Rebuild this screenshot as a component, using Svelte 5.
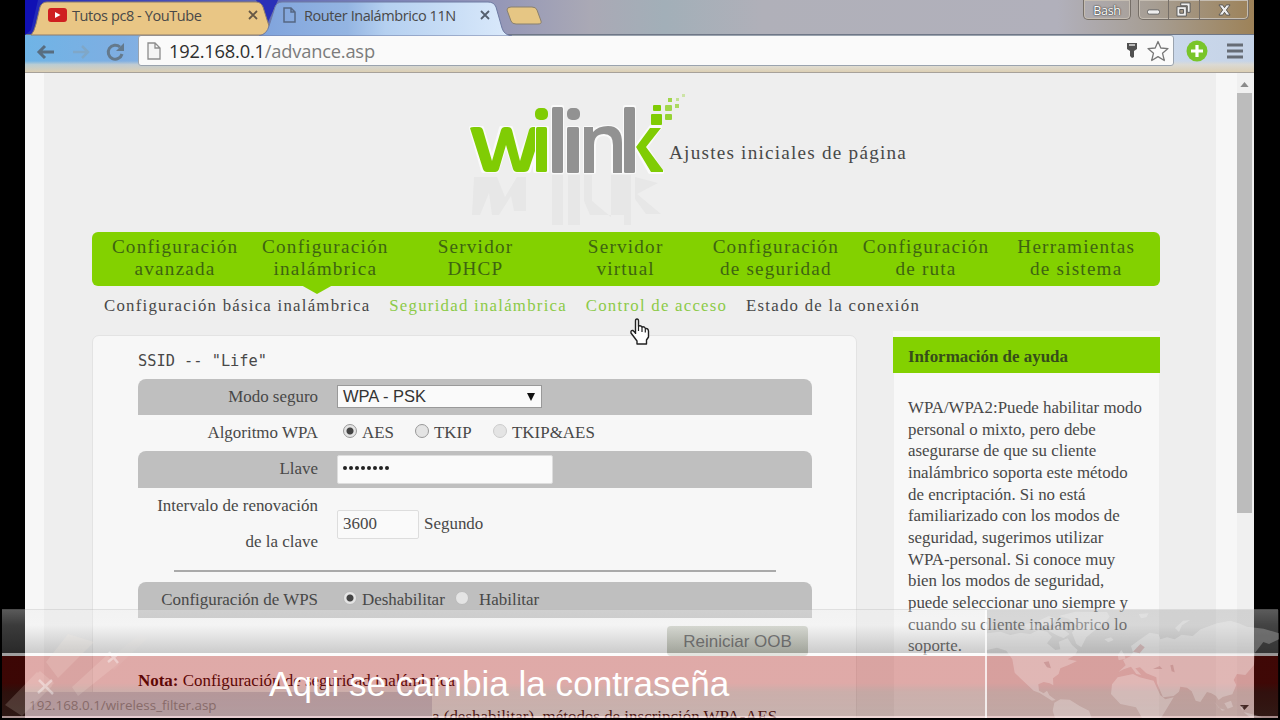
<!--
  Ventana del navegador con la configuración del router y el rótulo inferior.
-->
<script lang="ts">
	interface MenuItem {
		lines: [string, string];
		active?: boolean;
	}

	const menu: MenuItem[] = [
		{ lines: ['Configuración', 'avanzada'] },
		{ lines: ['Configuración', 'inalámbrica'], active: true },
		{ lines: ['Servidor', 'DHCP'] },
		{ lines: ['Servidor', 'virtual'] },
		{ lines: ['Configuración', 'de seguridad'] },
		{ lines: ['Configuración', 'de ruta'] },
		{ lines: ['Herramientas', 'de sistema'] }
	];

	const submenu = [
		{ label: 'Configuración básica inalámbrica', green: false },
		{ label: 'Seguridad inalámbrica', green: true },
		{ label: 'Control de acceso', green: true },
		{ label: 'Estado de la conexión', green: false }
	];

	const help = [
		'WPA/WPA2:Puede habilitar modo',
		'personal o mixto, pero debe',
		'asegurarse de que su cliente',
		'inalámbrico soporta este método',
		'de encriptación. Si no está',
		'familiarizado con los modos de',
		'seguridad, sugerimos utilizar',
		'WPA-personal. Si conoce muy',
		'bien los modos de seguridad,',
		'puede seleccionar uno siempre y',
		'cuando su cliente inalámbrico lo',
		'soporte.'
	];
</script>

{#snippet radio(on: boolean, faint: boolean)}
	<span class="radio" class:on class:faint></span>
{/snippet}

<div class="screen">
	<div class="window">
		<header class="tabs">
			<svg class="tab-shapes" width="530" height="36" viewBox="25 0 530 36">
				<path d="M25 0H38L31 30L25 35Z" fill="#1010b4" />
				<path d="M256 0H278L268 22Z" fill="#2a30b8" />
				<path d="M31 35Q34 32 36 24L40 7Q42 2 47 2H256Q261 2 263 7L269 26Q270 33 262 35Z" fill="#e9c685" stroke="#8d7d6c" />
				<path d="M259 36Q267 34 269 26L275 7Q277 2 282 2H488Q494 2 496 7L502 28Q504 35 512 36Z" fill="url(#tabfill)" stroke="#6e7aa2" />
				<path d="M507 10Q507 7 511 7H532Q536 7 537 10L541 21Q542 24 538 24H516Q512 24 511 21Z" fill="#e6c684" stroke="#89806f" />
				<defs>
					<linearGradient id="tabfill">
						<stop offset="0" stop-color="#7fa3dc" />
						<stop offset=".35" stop-color="#94b5e2" />
						<stop offset=".5" stop-color="#b5d0f0" />
						<stop offset="1" stop-color="#dbeafb" />
					</linearGradient>
				</defs>
			</svg>
			<div class="tab first">
				<svg width="19" height="14" viewBox="0 0 19 14"><rect width="19" height="14" rx="3" fill="#cf1f20" /><path d="M7 4L12.500 7L7 10Z" fill="#fff" /></svg>
				<span class="tab-title">Tutos pc8 - YouTube</span>
				<svg width="10" height="10" viewBox="0 0 10 10"><path d="M1 1L9 9M9 1L1 9" stroke="#665845" stroke-width="1.800" /></svg>
			</div>
			<div class="tab second">
				<svg width="13" height="16" viewBox="0 0 13 16"><path d="M1 1H8L12 5V15H1ZM8 1V5H12" fill="none" stroke="#566783" stroke-width="1.500" /></svg>
				<span class="tab-title">Router Inalámbrico 11N</span>
				<svg width="10" height="10" viewBox="0 0 10 10"><path d="M1 1L9 9M9 1L1 9" stroke="#555f6e" stroke-width="1.800" /></svg>
			</div>
			<div class="bash">Bash</div>
			<div class="controls">
				<span class="min"><svg width="15" height="6" viewBox="0 0 16 7"><rect x="1" y="1" width="14" height="5" rx="2" fill="#eee" stroke="#555" /></svg></span>
				<span class="max"><svg width="16" height="15" viewBox="0 0 17 16"><path d="M5 1H15V11H12V4H5Z" fill="#eee" stroke="#555" /><path d="M1 5H11V15H1ZM4 8V12H8V8Z" fill="#eee" fill-rule="evenodd" stroke="#555" /></svg></span>
				<span class="close"><svg width="13" height="12" viewBox="0 0 14 13"><path d="M1 1H5L7 4L9 1H13L9 6.500L13 12H9L7 9L5 12H1L5 6.500Z" fill="#eee" stroke="#555" /></svg></span>
			</div>
		</header>

		<div class="toolbar">
			<svg class="nav-icons" width="90" height="24" viewBox="0 0 90 24">
				<path d="M20 13H5M11 7L5 13L11 19" fill="none" stroke="#586d80" stroke-width="3" />
				<path d="M39 13H54M48 7L54 13L48 19" fill="none" stroke="#7fa7c8" stroke-width="2.500" />
				<path d="M86 8A7 7 0 1 0 88 15" fill="none" stroke="#64798c" stroke-width="3" />
				<path d="M90 4V12H82Z" fill="#64798c" />
			</svg>
			<div class="address">
				<svg width="14" height="18" viewBox="0 0 14 18"><path d="M1 1H8L13 6V17H1ZM8 1V6H13" fill="#f4f4f4" stroke="#8d8d8d" stroke-width="1.300" /></svg>
				<span class="url">192.168.0.1<span class="path">/advance.asp</span></span>
				<svg class="key" width="12" height="17" viewBox="0 0 12 17"><path d="M1 1H11V7L8 9V15L6 16L4 14V9L1 7Z" fill="#505050" /><path d="M3 3H9" stroke="#ddd" stroke-width="1.500" /></svg>
				<svg width="22" height="22" viewBox="0 0 22 22"><path d="M11 1.500L13.800 8L21 8.600L15.500 13.200L17.300 20.500L11 16.600L4.700 20.500L6.500 13.200L1 8.600L8.200 8Z" fill="#fcfcfc" stroke="#777" stroke-width="1.300" stroke-linejoin="round" /></svg>
			</div>
			<svg width="22" height="22" viewBox="0 0 22 22"><circle cx="11" cy="11" r="10.500" fill="#79c52a" /><path d="M11 5V17M5 11H17" stroke="#fff" stroke-width="3.200" /></svg>
			<svg class="burger" width="16" height="16" viewBox="0 0 16 16"><path d="M0 2H16M0 8H16M0 14H16" stroke="#666c75" stroke-width="3" /></svg>
		</div>

		<div class="viewport">
			<main class="page">
				<div class="brand">
					<svg width="225" height="140" viewBox="0 0 225 140">
						<g fill="#e7e7e7">
							<path d="M14 92H37L45 112L57 92H66V126H54L51 111L39 130H32L29 108L20 130H12Z" />
							<path d="M92 90H103V140H92ZM108 90H120V140H108ZM124 90H132V116L151 132V90H171V140H164V130H130L124 116ZM175 92L198 98L177 109L201 129H186L175 114Z" />
						</g>
						<g stroke="#fafafa" stroke-width="4" fill="#fafafa" stroke-linejoin="round">
							<path d="M11 43H22L32 75L41 43H51L60 73L72 43H87V86H75V66L69 86H55L46 58L37 86H23Z" />
							<path d="M93 22H102V87H93ZM108 43H118V87H108ZM125 43H132V47Q138 42 148 42Q162 42 162 58V87H153V60Q153 49 144 49Q134 49 134 60V87H125ZM165 22H174V87H165ZM176 62L191 42H200L186 62L202 87H190Z" />
						</g>
						<g fill="#80cc04">
							<path d="M10 43Q11 42 14 42H19Q22 42 23 45L32 76L41 45Q42 42 45 42H48Q51 42 52 45L60 76L69 45Q70 42 73 42H75V66L69 84Q68 87 64 87H57Q54 87 53 84L46 60L39 84Q38 87 35 87H27Q24 87 23 84Z" />
							<rect x="76" y="42" width="11" height="45" rx="1.500" />
							<rect x="75" y="23" width="13" height="12" rx="5" />
							<path d="M176 62L190 43H201L186 62L203 85V87H191Z" />
							<rect x="191" y="29" width="11" height="11" rx="1" />
							<rect x="193" y="20" width="8" height="6" rx="1" />
							<rect x="205" y="29" width="7" height="6" rx="1" opacity=".8" />
							<rect x="205" y="20" width="7" height="6" rx="1" opacity=".7" />
							<rect x="208" y="13" width="4" height="4" opacity=".7" />
							<rect x="215" y="19" width="4" height="4" opacity=".6" />
							<rect x="216" y="13" width="3" height="3" opacity=".4" />
							<rect x="222" y="9" width="3" height="3" opacity=".3" />
						</g>
						<g fill="#929292">
							<rect x="92" y="22" width="11" height="66" rx="1.500" />
							<rect x="107" y="42" width="12" height="46" rx="1.500" />
							<rect x="107" y="23" width="13" height="12" rx="5" />
							<path d="M124 42H133V47Q138 41 148 41Q162 41 162 58V88H153V60Q153 49 144 49Q134 49 134 60V88H124Z" />
							<rect x="164" y="22" width="11" height="66" rx="1.500" />
						</g>
					</svg>
					<span class="tagline">Ajustes iniciales de página</span>
				</div>

				<nav class="menu">
					{#each menu as item}
						<a class="item" class:active={item.active}>
							{item.lines[0]}<br />{item.lines[1]}
						</a>
					{/each}
				</nav>
				<div class="submenu">
					{#each submenu as item}
						<span class:green={item.green}>{item.label}</span>
					{/each}
				</div>

				<div class="columns">
					<section class="panel">
						<div class="ssid">SSID -- "Life"</div>
						<div class="row grey mode">
							<span class="label">Modo seguro</span>
							<span class="select">WPA - PSK <i></i></span>
						</div>
						<div class="row algo">
							<span class="label">Algoritmo WPA</span>
							{@render radio(true, false)}<span class="opt aes">AES</span>
							{@render radio(false, false)}<span class="opt tkip">TKIP</span>
							{@render radio(false, true)}<span class="opt">TKIP&amp;AES</span>
						</div>
						<div class="row grey secret">
							<span class="label">Llave</span>
							<span class="input dots">
								{#each Array(8) as _}<i></i>{/each}
							</span>
						</div>
						<div class="row interval">
							<span class="label">Intervalo de renovación<br />de la clave</span>
							<span class="input small">3600</span>
							<span class="unit">Segundo</span>
						</div>
						<hr />
						<div class="row grey wps">
							<span class="label">Configuración de WPS</span>
							{@render radio(true, false)}<span class="opt off">Deshabilitar</span>
							{@render radio(false, false)}<span class="opt enable">Habilitar</span>
						</div>
						<div class="oob">Reiniciar OOB</div>
						<p class="note"><b>Nota:</b> <span>Configuración de seguridad inalámbrica</span></p>
						<p class="cut">a (deshabilitar), métodos de inscripción WPA-AES</p>
					</section>

					<aside>
						<h2>Información de ayuda</h2>
						<div class="help">
							{#each help as line}<div>{line}</div>{/each}
						</div>
					</aside>
				</div>
			</main>
			<div class="scrollbar">
				<svg width="9" height="5" viewBox="0 0 10 6"><path d="M0 6L5 0L10 6Z" fill="#8a8a8a" /></svg>
				<div class="thumb"></div>
				<svg class="down" width="9" height="5" viewBox="0 0 9 5"><path d="M0 0H9L4.500 5Z" fill="#222" /></svg>
			</div>
			<div class="status">192.168.0.1/wireless_filter.asp</div>
		</div>
	</div>

	<svg class="cursor" width="22" height="28" viewBox="0 0 22 28">
		<path d="M6.500 16V3Q6.500 1 8 1Q9.500 1 9.500 3V8Q12 7 13 9Q15 8 16.500 10.500Q19 10 19.500 13V19L17.500 22V26H8V23L5 19L2 15Q1.500 12 4 12.500L6.500 15" fill="#fff" stroke="#222" stroke-width="1.400" stroke-linejoin="round" />
		<path d="M9.500 8V13M13 9V14M16.300 10.500V14.500" stroke="#222" stroke-width="1.200" />
	</svg>

	<div class="banner">
		<div class="glass"></div>
		<div class="red"></div>
		<svg class="shards" width="160" height="108" viewBox="0 0 160 108">
			<g fill="#fff3e6" opacity=".16">
				<path d="M3 95L35 62L50 76L20 106Z" />
				<path d="M24 74L38 61L52 73L30 96Z" />
				<path d="M44 52L66 24L92 32L56 68Z" />
				<path d="M70 77L105 45L116 54L76 86Z" />
				<path d="M104 52L138 24L146 28L112 60Z" opacity=".4" />
			</g>
			<path d="M37 70L51 84M50 70L36 83M107 42L116 53M116 44L106 52" stroke="#fff" stroke-width="2.500" opacity=".4" />
		</svg>
		<svg class="world" width="292" height="108" viewBox="20 30 876 324">
			<path d="M20 30H896V163H20Z" fill="#666" opacity=".2" />
			<path d="M20 163H896V354H20Z" fill="#722" opacity=".07" />
			<g class="land">
				<path d="M20 100L60 95L90 105L120 98L150 102L175 90L200 95L215 110L200 130L225 150L240 148L235 125L262 115L275 135L292 150L285 165L262 178L290 183L265 195L240 205L235 222L218 235L219 256L208 250L190 246L174 253L176 272L190 280L200 272L207 286L226 300L215 302L178 279L160 272L120 235L103 218L96 178L78 152L50 143L20 150Z" />
				<path d="M130 72L160 68L180 82L165 92L138 87ZM175 62L205 48L225 55L215 75L190 80ZM205 92L235 78L268 102L250 115L228 105Z" />
				<path d="M235 48L285 35L380 36L388 50L372 70L340 94L318 112L303 142L288 132L275 98L290 78L265 56Z" />
				<path d="M372 118L392 112L400 120L384 127ZM475 42L505 40L498 52L482 55Z" />
				<path d="M222 308L240 298L268 299L298 318L326 332L334 354H224L217 332Z" />
				<path d="M414 216L436 196L428 180L450 169L458 157L452 138L480 118L508 98L535 103L540 118L560 112L583 118L604 104L637 108L661 88L710 70L750 62L775 70L800 80L850 86L896 100V118L866 132L849 126L823 160L821 195L795 225L770 222L760 240L768 255L756 283L727 291L715 300L707 288L693 280L680 276L660 306L646 302L634 274L620 263L600 260L596 275L580 288L548 292L530 250L528 232L498 220L479 202L465 205L483 225L468 222L452 200L430 208Z" />
				<path d="M412 166L423 150L432 164L436 176L415 181ZM584 84L608 62L630 60L605 76L596 96Z" />
				<path d="M412 232L458 222L478 232L520 242L540 286L555 298L580 292L560 325L542 354H485L467 322L420 312L392 282L395 253Z" />
				<path d="M700 304L716 324L735 330L725 332ZM732 310L752 302L758 320L742 326ZM780 320L790 317L786 332ZM790 336L825 345L845 352H808Z" />
			</g>
			<path d="M190 187L205 184L212 205L200 202ZM518 207L538 198L546 207ZM570 196L578 194L583 217L574 214ZM458 155L480 132L493 142L478 160Z" fill="#a66" opacity=".35" />
		</svg>
		<div class="caption">Aqui se cambia la contraseña</div>
	</div>
</div>

<style>
	:global(body) {
		margin: 0;
		background: #000;
	}
	.screen {
		position: relative;
		width: 1280px;
		height: 720px;
		overflow: hidden;
		background: #000;
		font-family: 'Liberation Serif', serif;
		color: #484848;
	}
	.window {
		display: flex;
		flex-direction: column;
		width: 1229px;
		height: 718px;
		margin-left: 25px;
		overflow: hidden;
		background: #f7f7f7;
	}
	svg {
		display: block;
		flex-shrink: 0;
	}
	.tabs {
		position: relative;
		display: flex;
		height: 35px;
		flex-shrink: 0;
		background: linear-gradient(90deg, #2026b8 0, #626bb7 20%, #9698b7 39%, #aaa9b5 46%, #a2afb8 52%, #b0b0b9 60%, #b1b0bb 84%, #a69d92 92%, #9d8258 100%);
		border-bottom: 1px solid #6f7787;
		box-sizing: border-box;
	}
	.tab-shapes {
		position: absolute;
		left: 0;
		top: 0;
	}
	.tab {
		position: relative;
		display: flex;
		align-items: center;
		height: 30px;
		box-sizing: border-box;
		font: 14.500px 'Open Sans', sans-serif;
		color: #484848;
	}
	.tab-title {
		flex: 1;
		white-space: nowrap;
		letter-spacing: -0.42px;
	}
	.first {
		width: 210px;
		margin-left: 23px;
		gap: 5px;
	}
	.second {
		width: 207px;
		margin-left: 25px;
		gap: 8px;
	}
	.bash,
	.controls {
		height: 20px;
		border: 1px solid #766f68;
		border-top: 0;
		border-radius: 0 0 5px 5px;
		box-shadow: inset 0 0 0 1px #c5bdb2;
		box-sizing: border-box;
	}
	.bash {
		width: 48px;
		margin-left: 593px;
		text-align: center;
		font: 12.500px/21px 'Open Sans', sans-serif;
		letter-spacing: -0.3px;
		color: #fff;
		text-shadow: 0 0 1px #333, 0 0 2px #333;
	}
	.controls {
		display: flex;
		width: 111px;
		margin-left: 7px;
	}
	.controls span {
		display: grid;
		place-items: center;
		border-right: 1px solid #766f68;
	}
	.min {
		width: 29px;
		padding-top: 5px;
	}
	.max {
		width: 30px;
	}
	.controls .close {
		flex: 1;
		border: 0;
	}
	.toolbar {
		display: flex;
		align-items: center;
		height: 38px;
		padding: 0 11px 6px 9px;
		flex-shrink: 0;
		box-sizing: border-box;
		background:
			linear-gradient(transparent 70%, #e6dcc8a0 80%, #dccfb4 100%),
			linear-gradient(90deg, #6fb4e6 0, #7faee2 8%, #a9c9ed 25%, #cfe2f6 45%, #dce9f8 70%, #c5d3e7 100%);
		border-bottom: 1px solid #a7a199;
	}
	.address {
		display: flex;
		align-items: center;
		width: 1036px;
		height: 31px;
		margin: 0 12px 0 14px;
		padding: 0 4px 0 8px;
		box-sizing: border-box;
		border: 1px solid #9aa3ae;
		border-radius: 3px;
		background: #fafafa;
	}
	.url {
		flex: 1;
		margin-left: 8px;
		font: 18.300px 'Open Sans', sans-serif;
		letter-spacing: -0.2px;
		color: #2e2e2e;
	}
	.path {
		color: #7c7c7c;
	}
	.key {
		margin-right: 9px;
	}
	.burger {
		margin-left: 19px;
	}
	.viewport {
		position: relative;
		display: flex;
		flex: 1;
		min-height: 0;
	}
	.page {
		width: 1172px;
		height: 645px;
		margin-left: 19px;
		padding: 0 56px 0 48px;
		box-sizing: border-box;
		overflow: hidden;
		background: #eee;
	}
	.brand {
		display: flex;
		height: 159px;
		padding: 12px 0 0 368px;
		box-sizing: border-box;
	}
	.tagline {
		margin: 57px 0 0 -16px;
		font-size: 19.2px;
		letter-spacing: 1.22px;
		line-height: 22px;
		white-space: nowrap;
	}
	.menu {
		display: grid;
		grid-template-columns: repeat(7, 150.2px);
		height: 54px;
		padding-left: 8px;
		border-radius: 6px;
		background: #83d100;
		color: #3e6411;
	}
	.item {
		position: relative;
		padding-top: 4px;
		text-align: center;
		font-size: 19.2px;
		letter-spacing: 1.2px;
		line-height: 21.6px;
	}
	.item.active::after {
		content: '';
		position: absolute;
		left: 51px;
		top: 53px;
		border: 16px solid transparent;
		border-top: 9px solid #83d100;
		border-bottom: 0;
	}
	.submenu {
		display: flex;
		gap: 18.800px;
		height: 49px;
		padding: 9px 0 0 12px;
		box-sizing: border-box;
		font-size: 16.8px;
		letter-spacing: 1.25px;
		line-height: 22px;
		white-space: nowrap;
	}
	.green {
		color: #8cca48;
	}
	.columns {
		display: flex;
		justify-content: space-between;
		align-items: flex-start;
	}
	.panel {
		width: 765px;
		height: 400px;
		padding: 0 44px 0 45px;
		box-sizing: border-box;
		border: 1px solid #e3e3e3;
		border-radius: 7px 7px 0 0;
		background: #f7f7f7;
		font-size: 16.95px;
	}
	.ssid {
		height: 43px;
		padding-top: 13px;
		box-sizing: border-box;
		font: 15.300px/24px 'DejaVu Sans Mono', monospace;
	}
	.row {
		display: flex;
		align-items: center;
		white-space: nowrap;
	}
	.grey {
		height: 36px;
		border-radius: 8px 8px 0 0;
		background: #bfbfbf;
	}
	.label {
		width: 180px;
		margin-right: 19px;
		text-align: right;
		line-height: 36px;
	}
	.select {
		position: relative;
		display: flex;
		align-items: center;
		justify-content: space-between;
		width: 205px;
		height: 23px;
		margin-top: -1px;
		padding: 0 6px 0 5px;
		box-sizing: border-box;
		border: 1px solid #999;
		background: #fafafa;
		font: 16.500px 'Liberation Sans', sans-serif;
		color: #333;
	}
	.select i {
		border: 4px solid transparent;
		border-top: 8px solid #111;
		border-bottom: 0;
	}
	.algo {
		height: 36px;
	}
	.radio {
		width: 14px;
		height: 14px;
		margin: -5px 5px 0 6px;
		box-sizing: border-box;
		border: 1px solid #999;
		border-radius: 50%;
		background: #e4e4e4;
	}
	.radio.on {
		background: radial-gradient(circle, #444 0 3px, #e4e4e4 4px);
	}
	.radio.faint {
		border-color: #ccc;
	}
	.wps .radio {
		border-color: #bbb;
	}
	.aes {
		width: 47px;
	}
	.tkip {
		width: 53px;
	}
	.secret {
		height: 37px;
	}
	.secret .label {
		line-height: 35px;
		margin-top: -2px;
	}
	.input {
		display: flex;
		align-items: center;
		width: 216px;
		height: 29px;
		padding-left: 5px;
		box-sizing: border-box;
		border: 1px solid #ddd;
		border-radius: 2px;
		background: #fafafa;
	}
	.dots {
		gap: 2px;
		padding-bottom: 4px;
	}
	.dots i {
		width: 4px;
		height: 4px;
		border-radius: 50%;
		background: #222;
	}
	.small {
		width: 82px;
	}
	.interval {
		height: 72px;
	}
	.unit {
		margin-left: 5px;
	}
	hr {
		height: 2px;
		margin: 10px 36px 10px 36px;
		border: 0;
		background: #aaa;
	}
	.off {
		width: 87px;
	}
	.enable {
		margin-left: 5px;
	}
	.oob {
		width: 141px;
		height: 30px;
		margin: 8px 4px 0 auto;
		border-radius: 4px;
		background: linear-gradient(#ced1c8, #b4b8aa);
		text-align: center;
		font: 17px/31px 'Liberation Sans', sans-serif;
		color: #555;
	}
	.note {
		margin: 14px 0 0;
		line-height: 22px;
		color: #300;
		white-space: nowrap;
	}
	.cut {
		margin: 14px 0 0 294px;
		line-height: 22px;
		color: #300;
		white-space: nowrap;
	}
	aside {
		width: 267px;
		margin-top: -4px;
		border-top: 6px solid #f5f5f5;
	}
	h2 {
		height: 36px;
		margin: 0;
		padding-left: 15px;
		font-size: 16.95px;
		line-height: 40px;
		background: #83d100;
		color: #364d1a;
	}
	.help {
		height: 360px;
		margin: 0 1px;
		padding: 24px 0 0 14px;
		background: #f8f8f8;
		font-size: 16.88px;
		line-height: 21.65px;
		white-space: nowrap;
	}
	.scrollbar {
		display: flex;
		flex-direction: column;
		align-items: center;
		width: 17px;
		margin-left: auto;
		padding: 9px 2px 8px 0;
		box-sizing: border-box;
		background: #f0f0f0;
	}
	.thumb {
		width: 15px;
		height: 420px;
		margin-top: 6px;
		background: #bcbcbc;
	}
	.down {
		margin-top: auto;
	}
	.status {
		position: absolute;
		left: 0;
		bottom: 0;
		width: 407px;
		height: 26px;
		padding-left: 4px;
		box-sizing: border-box;
		background: #d5d3dd;
		font: 13.400px/27px 'Open Sans', sans-serif;
		color: #8f888c;
	}
	.cursor {
		position: absolute;
		left: 629px;
		top: 318px;
	}
	.banner {
		position: absolute;
		left: 2px;
		top: 609px;
		width: 1276px;
		height: 109px;
	}
	.glass {
		height: 47px;
		border-top: 1px solid #bbb6;
		border-bottom: 3px solid #ffffffa0;
		background: linear-gradient(rgba(235, 235, 235, 0.38), rgba(235, 235, 235, 0.25) 35%, rgba(120, 120, 120, 0.34)) padding-box;
		box-sizing: border-box;
	}
	.red {
		height: 62px;
		border-bottom: 2px solid #ffffff90;
		background: linear-gradient(rgba(176, 20, 14, 0.34) 45%, rgba(125, 45, 35, 0.36) 60%, rgba(120, 65, 55, 0.38));
		box-sizing: border-box;
	}
	.shards,
	.world {
		position: absolute;
		top: 1px;
		left: 0;
	}
	.world {
		left: 983px;
		border-left: 2px solid #ffffffc0;
	}
	.land {
		fill: #fff;
		opacity: 0.24;
	}
	.caption {
		position: absolute;
		left: 267px;
		top: 54px;
		font: 35.100px/42px 'Liberation Sans', sans-serif;
		color: #fff;
		white-space: nowrap;
	}
</style>
